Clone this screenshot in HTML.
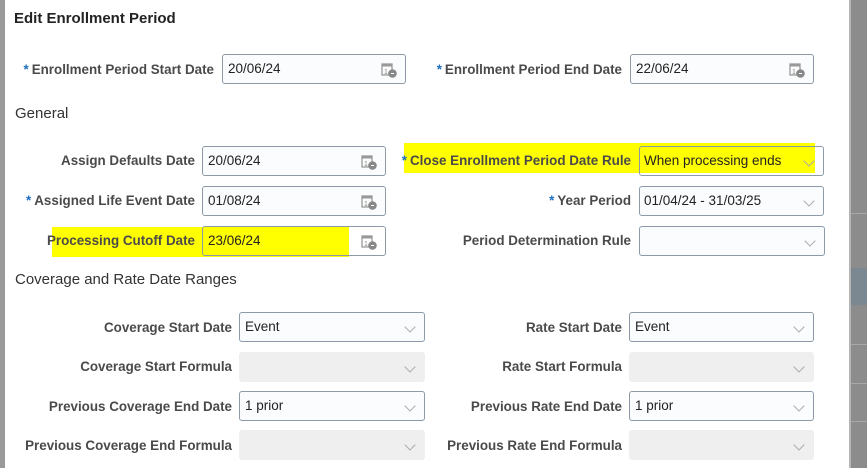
<!DOCTYPE html>
<html><head><meta charset="utf-8"><style>
body{margin:0;width:867px;height:468px;overflow:hidden;background:#8e8e8e;font-family:"Liberation Sans",Arial,sans-serif;position:relative}
.dlg{position:absolute;left:4px;top:0;width:844px;height:468px;background:#fff;border-right:2px solid #b5b5b5;border-left:1px solid #999}
.a{position:absolute}
.lab{position:absolute;text-align:right;font-size:13.4px;font-weight:bold;color:#4a4a4a;white-space:nowrap;line-height:16px}
.req{color:#1f6fbf;font-weight:bold;margin-right:3px}
.in{position:absolute;height:28px;border:1px solid #8b9aa6;border-radius:3px;background:#fbfcfd;font-size:13.5px;color:#222;line-height:28px;padding-left:5px;box-sizing:content-box}
.dis{background:#efefef;border-color:#efefef}
.hl{position:absolute;background:#ffff00}
.chev{position:absolute;right:10px;top:10px;width:7px;height:7px;border-right:1.5px solid #aaa;border-bottom:1.5px solid #aaa;transform:rotate(45deg)}
.cal{position:absolute;right:8px;top:7px;width:16px;height:16px}
.h{position:absolute;font-size:15px;color:#333}
</style></head><body>
<div class="a" style="left:848px;top:0;width:19px;height:468px;background:#8c8c8c"></div>
<div class="a" style="left:850px;top:268px;width:17px;height:37px;background:#7b8891"></div>
<div class="a" style="left:850px;top:213px;width:17px;height:1px;background:#a8a8a8"></div>
<div class="a" style="left:850px;top:344px;width:17px;height:1px;background:#a8a8a8"></div>
<div class="a" style="left:850px;top:383px;width:17px;height:1px;background:#a8a8a8"></div>
<div class="a" style="left:850px;top:421px;width:17px;height:1px;background:#a8a8a8"></div>
<div class="a" style="left:0;top:0;width:4px;height:468px;background:#9a9a9a"></div>
<div class="dlg"></div>
<div class="hl" style="left:404px;top:143px;width:411px;height:30px"></div>
<div class="hl" style="left:52px;top:227px;width:297px;height:30px"></div>

<div class="a" style="left:14px;top:10px;font-size:15px;font-weight:bold;color:#222">Edit Enrollment Period</div>

<div class="lab" style="right:653px;top:62px"><span class="req">*</span>Enrollment Period Start Date</div>
<div class="in" style="left:222px;top:54px;width:177px">20/06/24<svg class="cal" viewBox="0 0 16 16"><rect x="1" y="2" width="10" height="11" fill="none" stroke="#999" stroke-width="1.3"/><rect x="1" y="2" width="10" height="2.5" fill="#999"/><text x="3" y="12" font-size="7" fill="#888" font-family="Liberation Sans">1</text><circle cx="11.5" cy="11.5" r="4.3" fill="#888"/><path d="M10 11.5h3" stroke="#fff"/></svg></div>
<div class="lab" style="right:245px;top:62px"><span class="req">*</span>Enrollment Period End Date</div>
<div class="in" style="left:630px;top:54px;width:177px">22/06/24<svg class="cal" viewBox="0 0 16 16"><rect x="1" y="2" width="10" height="11" fill="none" stroke="#999" stroke-width="1.3"/><rect x="1" y="2" width="10" height="2.5" fill="#999"/><text x="3" y="12" font-size="7" fill="#888" font-family="Liberation Sans">1</text><circle cx="11.5" cy="11.5" r="4.3" fill="#888"/><path d="M10 11.5h3" stroke="#fff"/></svg></div>

<div class="h" style="left:15px;top:105px">General</div>

<div class="lab" style="right:672px;top:153px">Assign Defaults Date</div>
<div class="in" style="left:202px;top:146px;width:177px">20/06/24<svg class="cal" viewBox="0 0 16 16"><rect x="1" y="2" width="10" height="11" fill="none" stroke="#999" stroke-width="1.3"/><rect x="1" y="2" width="10" height="2.5" fill="#999"/><text x="3" y="12" font-size="7" fill="#888" font-family="Liberation Sans">1</text><circle cx="11.5" cy="11.5" r="4.3" fill="#888"/><path d="M10 11.5h3" stroke="#fff"/></svg></div>
<div class="lab" style="right:672px;top:193px"><span class="req">*</span>Assigned Life Event Date</div>
<div class="in" style="left:202px;top:186px;width:177px">01/08/24<svg class="cal" viewBox="0 0 16 16"><rect x="1" y="2" width="10" height="11" fill="none" stroke="#999" stroke-width="1.3"/><rect x="1" y="2" width="10" height="2.5" fill="#999"/><text x="3" y="12" font-size="7" fill="#888" font-family="Liberation Sans">1</text><circle cx="11.5" cy="11.5" r="4.3" fill="#888"/><path d="M10 11.5h3" stroke="#fff"/></svg></div>
<div class="lab" style="right:672px;top:233px">Processing Cutoff Date</div>
<div class="in" style="left:202px;top:226px;width:177px;background:transparent">23/06/24<svg class="cal" viewBox="0 0 16 16"><rect x="1" y="2" width="10" height="11" fill="none" stroke="#999" stroke-width="1.3"/><rect x="1" y="2" width="10" height="2.5" fill="#999"/><text x="3" y="12" font-size="7" fill="#888" font-family="Liberation Sans">1</text><circle cx="11.5" cy="11.5" r="4.3" fill="#888"/><path d="M10 11.5h3" stroke="#fff"/></svg></div>

<div class="lab" style="right:236px;top:153px"><span class="req">*</span>Close Enrollment Period Date Rule</div>
<div class="in" style="left:639px;top:146px;width:179px;background:transparent;padding-left:4px">When processing ends<div class="chev"></div></div>
<div class="lab" style="right:236px;top:193px"><span class="req">*</span>Year Period</div>
<div class="in" style="left:639px;top:186px;width:179px;padding-left:4px">01/04/24 - 31/03/25<div class="chev"></div></div>
<div class="lab" style="right:236px;top:233px">Period Determination Rule</div>
<div class="in" style="left:639px;top:226px;width:179px"><div class="chev"></div></div>

<div class="h" style="left:15px;top:271px">Coverage and Rate Date Ranges</div>

<div class="lab" style="right:635px;top:320px">Coverage Start Date</div>
<div class="in" style="left:239px;top:312px;width:179px">Event<div class="chev"></div></div>
<div class="lab" style="right:635px;top:359px">Coverage Start Formula</div>
<div class="in dis" style="left:239px;top:352px;width:179px"><div class="chev"></div></div>
<div class="lab" style="right:635px;top:399px">Previous Coverage End Date</div>
<div class="in" style="left:239px;top:391px;width:179px">1 prior<div class="chev"></div></div>
<div class="lab" style="right:635px;top:438px">Previous Coverage End Formula</div>
<div class="in dis" style="left:239px;top:430px;width:179px"><div class="chev"></div></div>

<div class="lab" style="right:245px;top:320px">Rate Start Date</div>
<div class="in" style="left:629px;top:312px;width:178px">Event<div class="chev"></div></div>
<div class="lab" style="right:245px;top:359px">Rate Start Formula</div>
<div class="in dis" style="left:629px;top:352px;width:178px"><div class="chev"></div></div>
<div class="lab" style="right:245px;top:399px">Previous Rate End Date</div>
<div class="in" style="left:629px;top:391px;width:178px">1 prior<div class="chev"></div></div>
<div class="lab" style="right:245px;top:438px">Previous Rate End Formula</div>
<div class="in dis" style="left:629px;top:430px;width:178px"><div class="chev"></div></div>
</body></html>
